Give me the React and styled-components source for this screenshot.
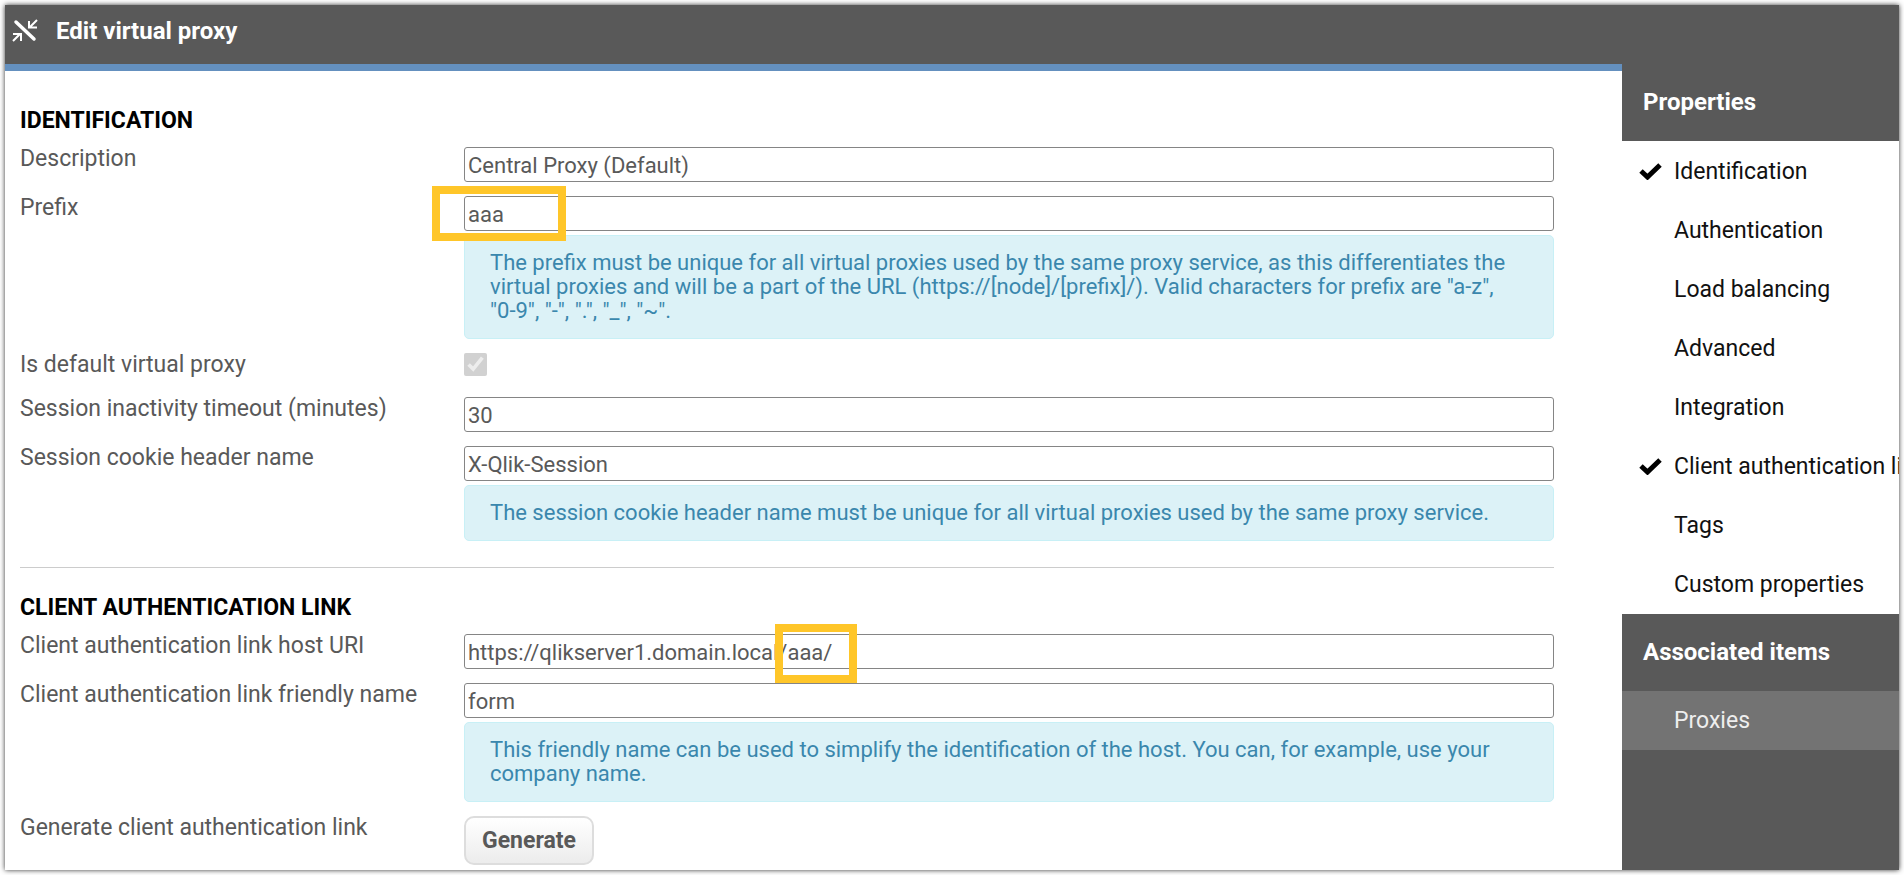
import styled, { createGlobalStyle } from 'styled-components';

const GlobalStyle = createGlobalStyle`
  * {
    box-sizing: border-box;
  }

  body {
    margin: 0;
    background: #fff;
    color: #595959;
    font-family: Roboto, "Liberation Sans", Arial, sans-serif;
    font-size: 23px;
    line-height: 24px;
  }

  input, button {
    font: inherit;
    color: inherit;
  }
`;

const Window = styled.div`
  display: flex;
  flex-direction: column;
  min-height: calc(100vh - 10px);
  margin: 5px;
  background: #fff;
  box-shadow: 0 0 5px #333;
  overflow: hidden;
`;

const TitleBar = styled.header`
  display: flex;
  align-items: center;
  gap: 18px;
  height: 59px;
  padding: 0 7px 8px;
  background: #595959;
  color: #fff;

  h1 {
    margin: 0;
    font-size: 24px;
  }
`;

const Body = styled.div`
  display: flex;
  flex: 1;
`;

const Form = styled.form`
  flex: 1;
  min-width: 0;
  padding: 38px 68px 4px 15px;
  border-top: 7px solid #6490bf;
`;

const Section = styled.section`
  & + & {
    margin-top: 26px;
    padding-top: 28px;
    border-top: 1px solid #ccc;
  }

  h2 {
    margin: 0;
    color: #000;
    font-size: 23px;
  }
`;

const Row = styled.div`
  display: grid;
  grid-template-columns: 444px 1fr;
  align-items: start;
  min-height: 30px;
  margin-top: 14px;
`;

const Field = styled.div`
  position: relative;
`;

const TextBox = styled.input`
  display: block;
  width: 100%;
  height: 35px;
  padding: 2px 3px 0;
  border: 1px solid #858585;
  border-radius: 3px;
  background: #fff;
  font-size: 22px;
`;

const CheckBox = styled.input`
  display: block;
  width: 23px;
  height: 23px;
  margin: 0;
`;

const Hint = styled.p`
  margin: 4px 0 0;
  padding: 15px 25px;
  border: 1px solid #c8f0f6;
  border-radius: 5px;
  background: #dcf2f7;
  color: #3a87ad;
  font-size: 22px;
`;

const Marker = styled.div`
  position: absolute;
  top: -10px;
  left: ${({ $left }) => $left}px;
  width: ${({ $width }) => $width}px;
  height: ${({ $height }) => $height}px;
  border: 8px solid #ffc629;
  pointer-events: none;
`;

const NoWrap = styled.span`
  white-space: nowrap;
`;

const GenerateButton = styled.button`
  height: 49px;
  padding: 0 16px;
  border: 2px solid #ddd;
  border-radius: 10px;
  background: linear-gradient(#fff, #ececec);
  font-weight: bold;
`;

const Sidebar = styled.aside`
  display: flex;
  flex-direction: column;
  flex: 0 0 277px;
  min-width: 0;
  overflow: hidden;
  background: #595959;

  h2 {
    margin: 0;
    padding: 26px 21px 27px;
    color: #fff;
    font-size: 24px;
  }
`;

const Nav = styled.nav`
  padding-top: 1px;
  background: #fff;
`;

const NavLink = styled.a`
  display: grid;
  grid-template-columns: 35px 1fr;
  align-items: center;
  height: 59px;
  padding-left: 17px;
  background: ${({ $dark }) => ($dark ? '#737373' : '#fff')};
  color: ${({ $dark }) => ($dark ? '#eee' : '#111')};
  text-decoration: none;
  white-space: nowrap;

  span {
    grid-column: 2;
  }
`;

const CollapseIcon = () => (
  <svg width="26" height="24" viewBox="0 0 26 24" fill="none" stroke="#fff">
    <path d="M4 3L22 20" strokeWidth="3.5" strokeLinecap="round" />
    <path d="M25 1L18 8M17 2V8.5H25" strokeWidth="2" />
    <path d="M1 22L8 15M1 15H9V22" strokeWidth="2" />
  </svg>
);

const CheckIcon = () => (
  <svg width="23" height="17" viewBox="0 0 23 17" fill="none" stroke="#000">
    <path d="M2 8L8.5 14L21 2" strokeWidth="5" />
  </svg>
);

const properties = [
  { name: 'Identification', checked: true },
  { name: 'Authentication' },
  { name: 'Load balancing' },
  { name: 'Advanced' },
  { name: 'Integration' },
  { name: 'Client authentication li', checked: true },
  { name: 'Tags' },
  { name: 'Custom properties' },
];

const TextRow = ({ id, label, value, hint, marker }) => (
  <Row>
    <label htmlFor={id}>{label}</label>
    <Field>
      <TextBox id={id} type="text" defaultValue={value} />
      {hint && <Hint>{hint}</Hint>}
      {marker && <Marker $left={marker.left} $width={marker.width} $height={marker.height} />}
    </Field>
  </Row>
);

const App = () => {
  return (
    <>
      <GlobalStyle />
      <Window>
        <TitleBar>
          <CollapseIcon />
          <h1>Edit virtual proxy</h1>
        </TitleBar>
        <Body>
          <Form onSubmit={(e) => e.preventDefault()}>
            <Section>
              <h2>IDENTIFICATION</h2>
              <TextRow id="description" label="Description" value="Central Proxy (Default)" />
              <TextRow
                id="prefix"
                label="Prefix"
                value="aaa"
                marker={{ left: -32, width: 134, height: 55 }}
                hint={
                  <>
                    The prefix must be unique for all virtual proxies used by the same proxy service, as this
                    differentiates the virtual proxies and will be a part of the URL (https://[node]/[prefix]/).
                    Valid characters for prefix are "a-z", <NoWrap>"0-9", "-", ".", "_", "~".</NoWrap>
                  </>
                }
              />
              <Row>
                <label htmlFor="default">Is default virtual proxy</label>
                <CheckBox id="default" type="checkbox" defaultChecked disabled />
              </Row>
              <TextRow id="timeout" label="Session inactivity timeout (minutes)" value="30" />
              <TextRow
                id="cookie"
                label="Session cookie header name"
                value="X-Qlik-Session"
                hint="The session cookie header name must be unique for all virtual proxies used by the same proxy service."
              />
            </Section>
            <Section>
              <h2>CLIENT AUTHENTICATION LINK</h2>
              <TextRow
                id="host"
                label="Client authentication link host URI"
                value="https://qlikserver1.domain.local/aaa/"
                marker={{ left: 311, width: 82, height: 59 }}
              />
              <TextRow
                id="friendly"
                label="Client authentication link friendly name"
                value="form"
                hint="This friendly name can be used to simplify the identification of the host. You can, for example, use your company name."
              />
              <Row>
                <label htmlFor="generate">Generate client authentication link</label>
                <div>
                  <GenerateButton id="generate" type="button">Generate</GenerateButton>
                </div>
              </Row>
            </Section>
          </Form>
          <Sidebar>
            <h2>Properties</h2>
            <Nav>
              {properties.map((item) => (
                <NavLink key={item.name} href="#">
                  {item.checked && <CheckIcon />}
                  <span>{item.name}</span>
                </NavLink>
              ))}
            </Nav>
            <h2>Associated items</h2>
            <NavLink href="#" $dark>
              <span>Proxies</span>
            </NavLink>
          </Sidebar>
        </Body>
      </Window>
    </>
  );
};

export default App;
